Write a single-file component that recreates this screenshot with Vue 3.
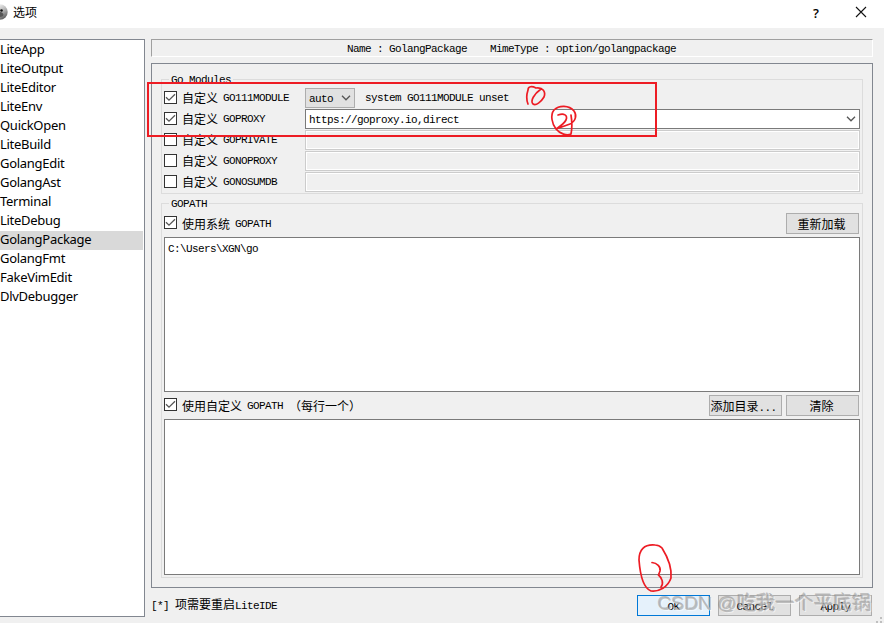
<script setup>
import { ref } from 'vue'

const pages = [
  'LiteApp', 'LiteOutput', 'LiteEditor', 'LiteEnv', 'QuickOpen', 'LiteBuild', 'GolangEdit',
  'GolangAst', 'Terminal', 'LiteDebug', 'GolangPackage', 'GolangFmt', 'FakeVimEdit', 'DlvDebugger'
]
const current = ref('GolangPackage')

const modules = ref([
  { name: 'GO111MODULE', checked: true, type: 'select' },
  { name: 'GOPROXY', checked: true, type: 'combo', value: 'https://goproxy.io,direct' },
  { name: 'GOPRIVATE', checked: false, type: 'input' },
  { name: 'GONOPROXY', checked: false, type: 'input' },
  { name: 'GONOSUMDB', checked: false, type: 'input' }
])

const useSystem = ref(true)
const useCustom = ref(true)
</script>

<template>
  <div class="dialog">
    <header class="titlebar">
      <svg class="logo" width="8" height="16" viewBox="0 0 8 16">
        <defs>
          <linearGradient id="ball" x1="0.4" y1="0" x2="1" y2="1">
            <stop offset="0" stop-color="#f4f4f4" />
            <stop offset="0.5" stop-color="#a8a8a8" />
            <stop offset="1" stop-color="#3c3c3c" />
          </linearGradient>
        </defs>
        <circle cx="0" cy="8" r="7.7" fill="url(#ball)" />
        <path d="M0 8 Q3 8 3.5 11 Q3 13 0 13z" fill="#555" />
        <circle cx="1.5" cy="6.5" r="1.3" fill="#111" />
      </svg>
      <span class="caption">选项</span>
      <span class="help">?</span>
      <svg class="close" width="12" height="12" viewBox="0 0 12 12">
        <path d="M1 1L11 11M11 1L1 11" stroke="#111" stroke-width="1.1" fill="none" />
      </svg>
    </header>

    <div class="body">
      <ul class="pages">
        <li v-for="page in pages" :key="page" :class="{ selected: page === current }" @click="current = page">
          {{ page }}
        </li>
      </ul>

      <main class="content">
        <div class="info">
          <span>Name : GolangPackage</span>
          <span>MimeType : option/golangpackage</span>
        </div>

        <section class="frame">
          <fieldset class="group modules">
            <span class="legend">Go Modules</span>
            <div v-for="row in modules" :key="row.name" class="row">
              <label class="check">
                <span class="box" @click="row.checked = !row.checked">
                  <svg v-if="row.checked" width="11" height="11" viewBox="0 0 11 11"><path d="M1 5.2L4 8.2L10 2.2" /></svg>
                </span>
                <span class="zh">自定义</span><span class="name">{{ row.name }}</span>
              </label>
              <template v-if="row.type === 'select'">
                <div class="select">
                  <span>auto</span>
                  <svg width="10" height="6" viewBox="0 0 10 6"><path d="M1 0.8L5 4.8L9 0.8" /></svg>
                </div>
                <span class="hint">system GO111MODULE unset</span>
              </template>
              <div v-else-if="row.type === 'combo'" class="combo">
                <span>{{ row.value }}</span>
                <svg width="10" height="6" viewBox="0 0 10 6"><path d="M1 0.8L5 4.8L9 0.8" /></svg>
              </div>
              <div v-else class="input"></div>
            </div>
          </fieldset>

          <fieldset class="group gopath">
            <span class="legend">GOPATH</span>
            <div class="bar">
              <label class="check">
                <span class="box" @click="useSystem = !useSystem">
                  <svg v-if="useSystem" width="11" height="11" viewBox="0 0 11 11"><path d="M1 5.2L4 8.2L10 2.2" /></svg>
                </span>
                <span class="zh">使用系统</span><span class="name">GOPATH</span>
              </label>
              <button class="zh">重新加载</button>
            </div>
            <div class="area system">C:\Users\XGN\go</div>
            <div class="bar">
              <label class="check">
                <span class="box" @click="useCustom = !useCustom">
                  <svg v-if="useCustom" width="11" height="11" viewBox="0 0 11 11"><path d="M1 5.2L4 8.2L10 2.2" /></svg>
                </span>
                <span class="zh">使用自定义</span><span class="name">GOPATH</span><span class="zh note">（每行一个）</span>
              </label>
              <button class="zh add">添加目录<span class="dots">...</span></button>
              <button class="zh">清除</button>
            </div>
            <div class="area custom"></div>
          </fieldset>
        </section>

        <footer class="footer">
          <span class="restart">[*] <span class="zh">项需要重启</span>LiteIDE</span>
          <button class="default">OK</button>
          <button>Cancel</button>
          <button>Apply</button>
        </footer>
      </main>
    </div>

    <svg class="grip" width="8" height="6" viewBox="0 0 8 6">
      <path d="M4 0h2v2h-2zM4 4h2v2h-2zM0 4h2v2h-2z" fill="#bfbfbf" />
    </svg>

    <div class="watermark">CSDN @吃我一个平底锅</div>

    <!-- hand-drawn notes -->
    <svg class="marks" width="884" height="623" viewBox="0 0 884 623">
      <rect x="148" y="83" width="508" height="53" stroke-width="2" />
      <path d="M528 104C526 99 527 93 528 90C528 86 532 86 536 88C543 87 546 92 544 97C541 102 536 106 533 104C530 101 534 94 541 89" />
      <path d="M570 124C576 121 577 115 574 111C569 105 559 105 554 110C550 115 552 124 556 129C560 134 567 136 571 134C572 129 572 121 571 115M558 115C564 113 568 115 566 120C564 124 559 127 556 129L570 124" />
      <path d="M655 545C644 544 639 550 639 560C640 573 643 588 651 591C659 592 668 587 671 578C672 568 667 556 662 548C660 546 657 545 655 545M652 562.500C657 563 661 567 660 571L658.500 575C662 578 664 583 661 587" />
    </svg>
  </div>
</template>

<style>
body {
  margin: 0;
  overflow: hidden;
}
</style>

<style scoped>
.dialog {
  position: relative;
  width: 884px;
  height: 623px;
  overflow: hidden;
  background: #f0f0f0;
  color: #000;
  font: 11px/14px "Liberation Mono", "Noto Sans CJK SC", monospace;
  letter-spacing: -0.6px;
}

.zh {
  font: 12px/14px "Noto Sans CJK SC", sans-serif;
  letter-spacing: 0;
}

.titlebar {
  display: flex;
  align-items: center;
  height: 28px;
  background: #fff;
  letter-spacing: 0;
}

.logo {
  margin-top: -5px;
}

.caption {
  flex: 1;
  margin: -4px 0 0 5px;
  font: 12px/16px "Noto Sans CJK SC", sans-serif;
}

.help {
  width: 8px;
  margin: -3px 34px 0 0;
  font: 600 13px/16px "Open Sans", sans-serif;
}

.close {
  margin: -4px 17px 0 0;
}

.body {
  display: flex;
  height: 578px;
  padding-top: 11px;
}

.pages {
  box-sizing: border-box;
  width: 145px;
  height: 578px;
  margin: 0 6px 0 0;
  padding: 1px 1px 0 0;
  border: 1px solid #828790;
  border-left: 0;
  background: #fff;
  list-style: none;
  font: 13px/17px "Noto Sans", sans-serif;
  letter-spacing: -0.28px;
}

.pages li {
  box-sizing: border-box;
  height: 19px;
  padding-bottom: 2px;
}

.pages .selected {
  background: #d9d9d9;
}

.content {
  width: 722px;
}

.info {
  display: flex;
  justify-content: center;
  align-items: center;
  gap: 23px;
  box-sizing: border-box;
  height: 18px;
  padding: 1px 1px 0 0;
  border: 1px solid #a0a0a0;
  border-right-color: #fff;
  border-bottom-color: #fff;
}

.frame {
  box-sizing: border-box;
  height: 525px;
  margin-top: 6px;
  padding: 15px 9px 0;
  border: 1px solid #828790;
}

.group {
  box-sizing: border-box;
  margin: 0;
  min-width: 0;
  padding: 0 2px;
  border: 1px solid #dcdcdc;
}

.legend {
  display: block;
  width: max-content;
  height: 14px;
  margin: -8px 0 0 5px;
  padding: 0 2px;
  background: #f0f0f0;
  line-height: 16px;
}

.modules {
  height: 115px;
}

.gopath {
  height: 375px;
  margin-top: 9px;
}

.row {
  display: flex;
  height: 20px;
  margin-bottom: 1px;
}

.modules .legend {
  margin-bottom: 2px;
}

.check {
  display: flex;
  align-items: center;
  width: 141px;
}

.box {
  box-sizing: border-box;
  width: 13px;
  height: 13px;
  margin: 0 5px 2px 0;
  border: 1px solid #333;
  background: #fff;
}

.box svg {
  display: block;
}

.box path,
.select path,
.combo path {
  fill: none;
  stroke: #555;
  stroke-width: 1.3;
}

.name {
  margin-left: 5px;
}

.select,
.combo,
.input {
  display: flex;
  align-items: center;
  justify-content: space-between;
  box-sizing: border-box;
  height: 20px;
  padding: 0 3px;
  border: 1px solid #7a7a7a;
}

.select {
  width: 50px;
  border-color: #adadad;
  background: #e1e1e1;
}

.select span,
.combo span {
  padding-top: 1px;
}

.combo {
  flex: 1;
  background: #fff;
}

.input {
  flex: 1;
  border-color: #ccc;
  box-shadow: inset 0 0 0 1px #fff;
}

.hint {
  margin-left: 10px;
  line-height: 21px;
}

.bar {
  display: flex;
  align-items: center;
  gap: 4px;
  height: 21px;
  padding-right: 1px;
}

.bar .check {
  flex: 1;
}

.gopath .legend {
  margin-bottom: 3px;
}

.note {
  margin-left: 6px;
}

button {
  box-sizing: border-box;
  width: 73px;
  height: 21px;
  padding: 2px 0 0;
  border: 1px solid #adadad;
  background: #e1e1e1;
  color: #000;
  font: inherit;
  letter-spacing: inherit;
  white-space: nowrap;
}

button.zh {
  padding: 0 2px 0 0;
  font: 12px/17px "Noto Sans CJK SC", sans-serif;
  letter-spacing: 0;
}

button.add {
  padding-right: 4px;
}

.dots {
  font: 11px/14px "Liberation Mono", monospace;
  letter-spacing: -0.6px;
}

.area {
  box-sizing: border-box;
  margin: 3px 0;
  padding: 4px 3px;
  border: 1px solid #7a7a7a;
  background: #fff;
}

.system {
  height: 155px;
}

.custom {
  height: 156px;
}

.footer {
  display: flex;
  gap: 8px;
  margin: 7px 1px 0 0;
}

.restart {
  flex: 1;
  line-height: 23px;
}

.default {
  border-color: #0078d7;
  background: #e5f1fb;
}

.grip {
  position: absolute;
  right: 0;
  bottom: 0;
}

.watermark {
  position: absolute;
  left: 658px;
  top: 591px;
  color: rgba(170, 170, 170, 0.7);
  font: 19.2px/26px "Liberation Sans", "Noto Sans CJK SC", sans-serif;
  letter-spacing: 0;
  text-shadow: 1px 1px 0 rgba(255, 255, 255, 0.5), -1px -1px 0 rgba(110, 110, 110, 0.4);
  white-space: nowrap;
  pointer-events: none;
}

.marks {
  position: absolute;
  left: 0;
  top: 0;
  fill: none;
  stroke: #ed1c24;
  stroke-width: 1.7;
  stroke-linecap: round;
  pointer-events: none;
}
</style>
